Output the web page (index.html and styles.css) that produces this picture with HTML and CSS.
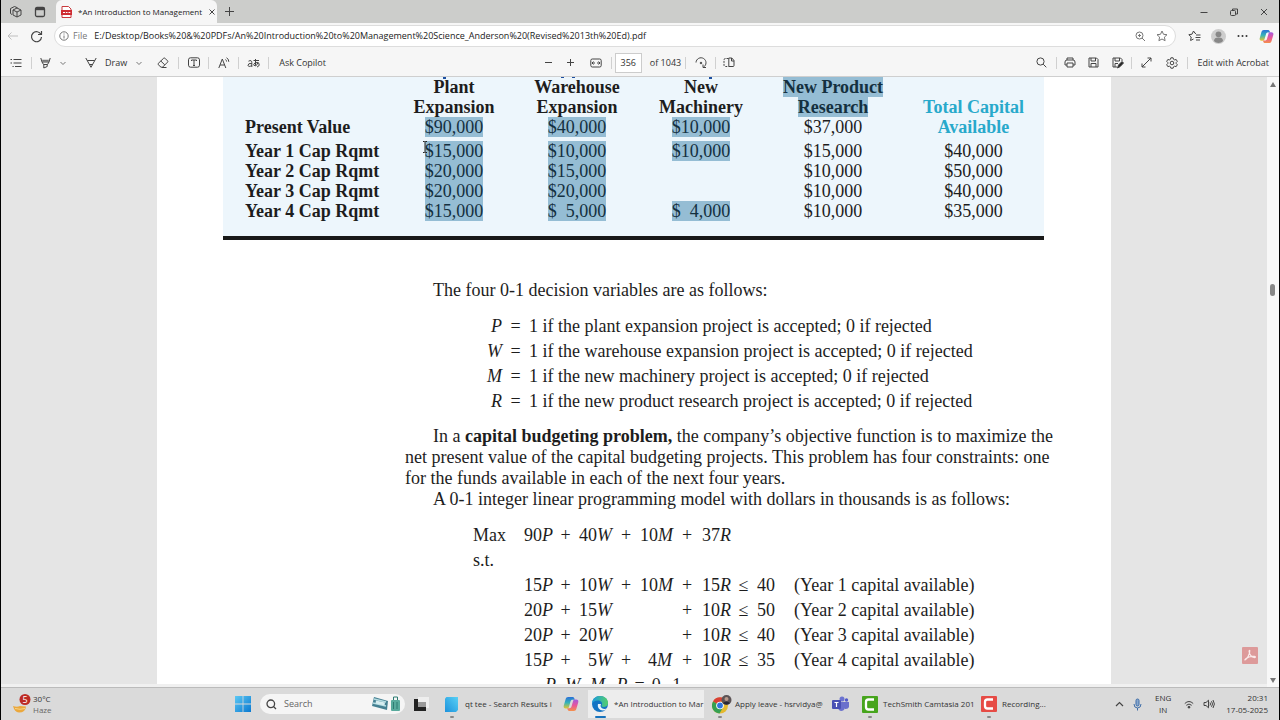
FILE: index.html
```html
<!DOCTYPE html>
<html lang="en">
<head>
<meta charset="utf-8">
<title>An Introduction to Management Science</title>
<link rel="stylesheet" href="styles.css">
</head>
<body>
<svg class="defs" aria-hidden="true">
  <defs>
    <linearGradient id="gBlue" x1="0" y1="0" x2="1" y2="1"><stop offset="0" stop-color="#5cc8f4"/><stop offset="1" stop-color="#0a78d0"/></linearGradient>
    <linearGradient id="gNote" x1="1" y1="0" x2="0" y2="1"><stop offset="0" stop-color="#58d0f5"/><stop offset="1" stop-color="#1c92dc"/></linearGradient>
    <linearGradient id="gCopA" x1="0" y1="0" x2="0" y2="1"><stop offset="0" stop-color="#2a6fd8"/><stop offset=".5" stop-color="#35b4b8"/><stop offset="1" stop-color="#e8c52e"/></linearGradient>
    <linearGradient id="gCopB" x1="0" y1="0" x2="0" y2="1"><stop offset="0" stop-color="#a45be0"/><stop offset=".5" stop-color="#e7569b"/><stop offset="1" stop-color="#f5904a"/></linearGradient>
    <linearGradient id="gEdge" x1="0" y1="0" x2="1" y2="0"><stop offset="0" stop-color="#1c9be0"/><stop offset="1" stop-color="#54d06a"/></linearGradient>
  </defs>
  <symbol id="chev" viewBox="0 0 10 10"><path d="M2.500 4l2.500 2.500L7.500 4" fill="none" stroke="#777"/></symbol>
  <symbol id="copilot" viewBox="0 0 16 16"><path d="M5.200 1h4.300c1 0 1.600.6 1.900 1.500l.4 1.300H9.600c-1.200 0-1.800.6-2.100 1.600L5.900 11c-.3 1-.9 1.500-1.900 1.500H2.800C1 12.500.3 11.200.8 9.500L2.600 3.200C3 1.800 3.800 1 5.200 1z" fill="url(#gCopA)"/><path d="M10.800 15H6.500c-1 0-1.600-.6-1.900-1.500l-.4-1.300h2.200c1.200 0 1.800-.6 2.100-1.600L10.100 5c.3-1 .9-1.500 1.900-1.500h1.200c1.800 0 2.500 1.300 2 3l-1.800 6.300c-.4 1.400-1.200 2.200-2.600 2.200z" fill="url(#gCopB)"/></symbol>
</svg>

<header class="tabs">
  <button class="tabicon" aria-label="Workspaces"><svg width="14" height="14" viewBox="0 0 14 14" class="ln"><path d="M4 5l4-2 4 2v5l-4 2-4-2zM4 5l4 2 4-2M8 7v5M3 9.500L1.500 8.500v-5L5.500 1.500l3 1.300"/></svg></button>
  <button class="tabicon" aria-label="Tab actions"><svg width="12" height="12" viewBox="0 0 12 12" class="ln"><rect x="1.500" y="1.500" width="9" height="9" rx="1.500" stroke-width="1.300"/><path d="M1.500 3h9" stroke-width="2.400"/></svg></button>
  <div class="tab">
    <svg width="11" height="12" viewBox="0 0 11 12"><path d="M1 .5h6.500L10 3v8.500H1z" fill="#fff" stroke="#c8393d"/><rect y="4" width="11" height="5" fill="#cf2c32"/><path d="M2 6.500h2M4.800 6.500h1.700M7.500 6.500h1.800" stroke="#fff"/></svg>
    <span class="tabtitle">*An Introduction to Management</span>
    <button aria-label="Close tab"><svg width="8" height="8" viewBox="0 0 8 8" class="ln"><path d="M1.500 1.500l5 5M6.500 1.500l-5 5"/></svg></button>
  </div>
  <button class="newtab" aria-label="New tab"><svg width="11" height="11" viewBox="0 0 11 11" class="ln"><path d="M5.500 1v9M1 5.500h9"/></svg></button>
  <div class="win">
    <button aria-label="Minimize"><svg width="10" height="10" viewBox="0 0 10 10" class="ln"><path d="M1.500 5.500h7"/></svg></button>
    <button aria-label="Restore"><svg width="10" height="10" viewBox="0 0 10 10" class="ln"><rect x="1.500" y="3.500" width="5" height="5" rx="1"/><path d="M3.500 3.500v-1.500h5v5h-2"/></svg></button>
    <button aria-label="Close"><svg width="10" height="10" viewBox="0 0 10 10" class="ln"><path d="M2 2l6 6M8 2l-6 6"/></svg></button>
  </div>
</header>

<div class="nav">
  <button class="back" aria-label="Back"><svg width="12" height="10" viewBox="0 0 12 10" class="ln"><path d="M11 5H1M4.500 1.500L1 5l3.500 3.500"/></svg></button>
  <button class="reload" aria-label="Reload"><svg width="13" height="13" viewBox="0 0 13 13" class="ln"><path d="M11 4.500A5 5 0 1 0 11.500 7M11.500 1v3.500H8" stroke-width="1.200"/></svg></button>
  <div class="address">
    <svg width="10" height="10" viewBox="0 0 10 10" class="ln grey"><circle cx="5" cy="5" r="4.200"/><path d="M5 4.500v3M5 2.500v1"/></svg>
    <span class="file">File</span>
    <input class="url" aria-label="Address" value="E:/Desktop/Books%20&amp;%20PDFs/An%20Introduction%20to%20Management%20Science_Anderson%20(Revised%2013th%20Ed).pdf">
    <button aria-label="Zoom level"><svg width="11" height="11" viewBox="0 0 11 11" class="ln grey"><circle cx="4.500" cy="4.500" r="3.500"/><path d="M7 7l3 3M3 4.500h3M4.500 3v3"/></svg></button>
    <button aria-label="Favourite"><svg width="12" height="12" viewBox="0 0 12 12" class="ln grey"><path d="M6 1l1.500 3.300 3.500.4-2.600 2.400.7 3.600L6 9l-3.100 1.700.7-3.600L1 4.700l3.500-.4z"/></svg></button>
  </div>
  <button class="navico" aria-label="Favourites"><svg width="13" height="12" viewBox="0 0 13 12" class="ln"><path d="M8 3.500L7 3.300 5.500 1 4 4.200.8 4.700 3.200 7l-.6 3.500L5.500 9M8 5h4.500M7.500 7.500h5M8 10h4"/></svg></button>
  <button class="navico" aria-label="Profile"><svg width="15" height="15" viewBox="0 0 15 15"><circle cx="7.500" cy="7.500" r="7.500" fill="#cdcdcd"/><circle cx="7.500" cy="5.300" r="2.900" fill="#888"/><path d="M3 12c0-2.500 1.500-3.500 4.500-3.500S12 9.500 12 12c-2 2.500-7 2.500-9 0z" fill="#888"/></svg></button>
  <button class="navico" aria-label="More"><svg width="11" height="4" viewBox="0 0 11 4" fill="#333"><circle cx="1.500" cy="2" r="1"/><circle cx="5.500" cy="2" r="1"/><circle cx="9.500" cy="2" r="1"/></svg></button>
  <button class="navico" aria-label="Copilot"><svg width="15" height="15"><use href="#copilot"/></svg></button>
</div>

<div class="tools">
  <div class="group">
    <button class="t30" aria-label="Contents"><svg width="12" height="10" viewBox="0 0 12 10" class="ln"><path d="M3.500 1.500h8M3.500 5h8M5 8.500h6.500M.5 1.500h1.500M.5 5h1.500M2.500 8.500h1.200"/></svg></button>
    <i class="sep"></i>
    <button class="t26" aria-label="Highlight"><svg width="11" height="12" viewBox="0 0 11 12" class="ln"><path d="M.8 1l1.200 4h7l1.200-4M2 5l1.500 2.500h4L9 5M3.800 7.500V11l3.400-1.500v-2"/><path d="M2 2.800h7l-.5 2h-6z" fill="#777" stroke="none"/></svg></button>
    <button class="t10" aria-label="Highlight colours"><svg width="10" height="10"><use href="#chev"/></svg></button>
    <button class="draw"><svg width="12" height="11" viewBox="0 0 12 11" class="ln"><path d="M.8 1L6 10.300 11.200 1M2.300 3.500h7.400M4.500 7.500h3"/></svg>Draw</button>
    <button class="t10" aria-label="Draw options"><svg width="10" height="10"><use href="#chev"/></svg></button>
    <button class="t30 erase" aria-label="Erase"><svg width="12" height="12" viewBox="0 0 12 12" class="ln"><path d="M1.200 6.500L6.700 1.200q.6-.5 1.200 0l2.700 2.700q.5.6 0 1.200L5.500 10.200H4L1.200 7.600q-.5-.6 0-1.100zM3.800 4l4 3.900M5 10.500h4.500"/></svg></button>
    <i class="sep"></i>
    <button class="t29" aria-label="Add text"><svg width="12" height="11" viewBox="0 0 12 11" class="ln"><rect x=".5" y=".8" width="11" height="9.400" rx="2"/><path d="M3.500 4V3h5v1M6 3v5.500M5 8.500h2"/></svg></button>
    <i class="sep"></i>
    <button class="t29" aria-label="Read aloud"><svg width="12" height="12" viewBox="0 0 12 12" class="ln"><path d="M.8 11L4.300 2l3.500 9M2 8h4.500M7.500 2.500q1 .7 1 2M8.500.8q2.300 1 2.300 4"/></svg></button>
    <i class="sep"></i>
    <button class="t29" aria-label="Translate"><svg width="13" height="10" viewBox="0 0 13 10" class="ln"><path d="M1.500 3.200Q4.800 1.500 4.800 4.500V9M4.800 5.500Q1 5 1 7.300 1.500 9.500 4.800 7.500M6.500 2.500h5.500M8.500 1v6.500q-2 .5-1.800-1 .5-2 3.500-2 2.300.3 2 2.500-.4 1.500-2.200 2M11 4q-.5 3-2.500 4"/></svg></button>
    <i class="sep"></i>
    <button class="ask">Ask Copilot</button>
  </div>
  <div class="group">
    <button class="t22" aria-label="Zoom out"><svg width="9" height="9" viewBox="0 0 9 9" class="ln"><path d="M1 4.500h7"/></svg></button>
    <button class="t22" aria-label="Zoom in"><svg width="9" height="9" viewBox="0 0 9 9" class="ln"><path d="M1 4.500h7M4.500 1v7"/></svg></button>
    <button class="t29" aria-label="Fit to width"><svg width="12" height="10" viewBox="0 0 12 10" class="ln"><rect x=".8" y="1" width="10.400" height="8" rx="1.500"/><path d="M2 5h3M7 5h3M3.500 3.500L2 5l1.500 1.500M8.500 3.500L10 5 8.500 6.500"/></svg></button>
    <i class="sep"></i>
    <input class="pageno" id="pageno" value="356"><label class="of" for="pageno">of 1043</label>
    <i class="sep"></i>
    <button class="t29" aria-label="Rotate"><svg width="12" height="12" viewBox="0 0 12 12" class="ln"><path d="M1 5.500a5 5 0 1 1 7.500 4.600M8 7.500v3h3"/><circle cx="6" cy="6" r=".8" fill="#444"/></svg></button>
    <i class="sep"></i>
    <button class="t26" aria-label="Page view"><svg width="12" height="11" viewBox="0 0 12 11" class="ln"><path d="M5.500 1.500h-3q-1.500 0-1.500 1.500v5q0 1.500 1.500 1.500h3" stroke-dasharray="2 1"/><path d="M5.800 1h3L11 3.500V8.500q0 1-1 1H5.800zM8.500 1v3H11"/></svg></button>
  </div>
  <div class="group right">
    <button class="t29" aria-label="Find"><svg width="11" height="11" viewBox="0 0 11 11" class="ln"><circle cx="4.500" cy="4.500" r="3.600"/><path d="M7.200 7.200L10.300 10.300"/></svg></button>
    <i class="sep"></i>
    <button class="t26" aria-label="Print"><svg width="12" height="11" viewBox="0 0 12 11" class="ln"><path d="M3 3V1h6v2M3 8H1V5q0-2 2-2h6q2 0 2 2v3H9M3 6h6v4H3z"/></svg></button>
    <button class="t22" aria-label="Save"><svg width="11" height="11" viewBox="0 0 11 11" class="ln"><path d="M1 1h7.500L10 2.500V10H1zM3 1v3h4.500V1M3 10V6.500h5V10"/></svg></button>
    <button class="t26" aria-label="Save as"><svg width="12" height="12" viewBox="0 0 12 12" class="ln"><path d="M5 10H1V1h7.500L10 2.500V4M3 1v3h4.500V1M3 10V6.500h3"/><path d="M5.500 11l1-3L10 4.500 11.500 6 8 9.700z" fill="#222"/></svg></button>
    <i class="sep"></i>
    <button class="t29" aria-label="Full screen"><svg width="11" height="11" viewBox="0 0 11 11" class="ln"><path d="M1 10L10 1M6.500 1H10v3.500M1 6.500V10h3.500"/></svg></button>
    <button class="t22 gear" aria-label="Settings"><svg width="12" height="12" viewBox="0 0 12 12" class="ln"><path d="M4.900.8h2.200l.5 1.600 1 .5 1.600-.4 1.100 1.900L10.200 5.500v1l1.100 1.200-1.100 1.900-1.600-.4-1 .5-.5 1.500H4.900l-.5-1.500-1-.5-1.600.4L.7 7.700l1.100-1.200v-1L.7 4.400l1.100-1.900 1.600.4 1-.5z"/><circle cx="6" cy="6" r="1.800"/></svg></button>
    <i class="sep"></i>
    <button class="acro">Edit with Acrobat</button>
  </div>
</div>

<main class="viewer">
  <div class="canvas">
    <article class="page">
      <div class="panel">
        <svg class="cut" width="270" height="3" viewBox="0 0 270 3" fill="#1d4fa0" aria-hidden="true"><path d="M0 0h3v2H0zM118 0h3v1h-3zM129 0h3v1h-3zM266 0h3v2h-3z"/></svg>
        <table class="data">
          <colgroup><col class="c0"><col class="c1"><col class="c2"><col class="c2"><col class="c4"><col></colgroup>
          <tr><td></td><th>Plant<br>Expansion</th><th>Warehouse<br>Expansion</th><th>New<br>Machinery</th><th><mark>New Product</mark><br><mark>Research</mark></th><th class="total" rowspan="2">Total Capital<br>Available</th></tr>
          <tr><th class="lab">Present Value</th><td><mark>$90,000</mark></td><td><mark>$40,000</mark></td><td><mark>$10,000</mark></td><td>$37,000</td></tr>
          <tr class="first"><th class="lab">Year 1 Cap Rqmt</th><td><mark>$15,000</mark></td><td><mark>$10,000</mark></td><td><mark>$10,000</mark></td><td>$15,000</td><td>$40,000</td></tr>
          <tr><th class="lab">Year 2 Cap Rqmt</th><td><mark>$20,000</mark></td><td><mark>$15,000</mark></td><td></td><td>$10,000</td><td>$50,000</td></tr>
          <tr><th class="lab">Year 3 Cap Rqmt</th><td><mark>$20,000</mark></td><td><mark>$20,000</mark></td><td></td><td>$10,000</td><td>$40,000</td></tr>
          <tr><th class="lab">Year 4 Cap Rqmt</th><td><mark>$15,000</mark></td><td><mark>$&nbsp; 5,000</mark></td><td><mark>$&nbsp; 4,000</mark></td><td>$10,000</td><td>$35,000</td></tr>
        </table>
        <svg class="ibeam" width="6" height="12" viewBox="0 0 6 12" fill="none" stroke="#222"><path d="M1 .5h1.500L3 1l.5-.5H5M3 1v10M1 11.500h1.500L3 11l.5.5H5"/></svg>
      </div>
      <div class="prose">
        <p class="intro">The four 0-1 decision variables are as follows:</p>
        <table class="vars">
          <tr><td class="v">P</td><td class="eq">=</td><td>1 if the plant expansion project is accepted; 0 if rejected</td></tr>
          <tr><td class="v">W</td><td class="eq">=</td><td>1 if the warehouse expansion project is accepted; 0 if rejected</td></tr>
          <tr><td class="v">M</td><td class="eq">=</td><td>1 if the new machinery project is accepted; 0 if rejected</td></tr>
          <tr><td class="v">R</td><td class="eq">=</td><td>1 if the new product research project is accepted; 0 if rejected</td></tr>
        </table>
        <p class="wide">In a <b>capital budgeting problem,</b> the company’s objective function is to maximize the</p>
        <p class="wide cont">net present value of the capital budgeting projects. This problem has four constraints: one</p>
        <p class="cont">for the funds available in each of the next four years.</p>
        <p>A 0-1 integer linear programming model with dollars in thousands is as follows:</p>
        <table class="model">
          <colgroup><col class="m0"><col class="m1"><col class="m2"><col class="m3"><col class="m4"><col class="m5"><col class="m6"><col class="m7"><col class="m8"><col class="m9"><col></colgroup>
          <tr><td>Max</td><td>90<i>P</i></td><td class="op">+</td><td class="r">40<i>W</i></td><td class="op">+</td><td class="r">10<i>M</i></td><td class="op">+</td><td>37<i>R</i></td></tr>
          <tr><td>s.t.</td></tr>
          <tr><td></td><td>15<i>P</i></td><td class="op">+</td><td class="r">10<i>W</i></td><td class="op">+</td><td class="r">10<i>M</i></td><td class="op">+</td><td>15<i>R</i></td><td class="op">≤</td><td>40</td><td class="note">(Year 1 capital available)</td></tr>
          <tr><td></td><td>20<i>P</i></td><td class="op">+</td><td class="r">15<i>W</i></td><td></td><td></td><td class="op">+</td><td>10<i>R</i></td><td class="op">≤</td><td>50</td><td class="note">(Year 2 capital available)</td></tr>
          <tr><td></td><td>20<i>P</i></td><td class="op">+</td><td class="r">20<i>W</i></td><td></td><td></td><td class="op">+</td><td>10<i>R</i></td><td class="op">≤</td><td>40</td><td class="note">(Year 3 capital available)</td></tr>
          <tr><td></td><td>15<i>P</i></td><td class="op">+</td><td class="r">5<i>W</i></td><td class="op">+</td><td class="r">4<i>M</i></td><td class="op">+</td><td>10<i>R</i></td><td class="op">≤</td><td>35</td><td class="note">(Year 4 capital available)</td></tr>
          <tr><td></td><td colspan="9"><div class="bin"><span><i>P,</i></span><span><i>W,</i></span><span><i>M,</i></span><span><i>R</i></span><span>=</span><span>0,</span><span>1</span></div></td></tr>
        </table>
      </div>
    </article>
    <button class="pdfbadge" aria-label="Open in Acrobat"><svg width="16" height="17" viewBox="0 0 16 17"><rect width="16" height="17" rx="1" fill="#dd9a9a"/><path d="M3 13c2-1 5-6 4.800-9.500C7 2.500 6.500 6 9 8.800c2 2.200 4.500 2 4.500 1.200 0-1.200-6-.8-9 1.200-1.500 1-1.800 1.800-1.500 1.800z" fill="none" stroke="#fbeaea" stroke-width="1.200"/></svg></button>
  </div>
  <div class="scroll"><i class="up"></i><i class="thumb"></i><i class="down"></i></div>
</main>

<footer class="taskbar">
  <button class="weather">
    <svg width="19" height="20" viewBox="0 0 19 20"><path d="M1 12q4 1.500 7 0l6 .5q-.5 6-7 6-4.500-.5-6-6.500z" fill="#eba83c"/><path d="M3 14.500q5 1.500 10 0" stroke="#f7d487" fill="none"/><circle cx="13" cy="5.500" r="5.500" fill="#bd2b25"/><text x="13" y="9" font-size="9" fill="#fff" text-anchor="middle" font-family="Open Sans">5</text></svg>
    <span>30°C<br><span class="haze">Haze</span></span>
  </button>
  <button class="start" aria-label="Start"><svg width="16" height="16" viewBox="0 0 16 16" fill="url(#gBlue)"><path d="M0 0h7.600v7.600H0zM8.400 0H16v7.600H8.400zM0 8.400h7.600V16H0zM8.400 8.400H16V16H8.400z"/></svg></button>
  <div class="search">
    <svg width="11" height="11" viewBox="0 0 11 11" class="ln"><circle cx="4.800" cy="4.800" r="3.800" stroke-width="1.300"/><path d="M7.500 7.500L10 10" stroke-width="1.300"/></svg>
    <input aria-label="Search" placeholder="Search">
    <svg width="28" height="16" viewBox="0 0 28 16"><path d="M2 1l14 4-1 9L0 10z" fill="#458092"/><path d="M2 3l12 3M1 7l13 3" stroke="#b5dce2" stroke-width="1.500"/><path d="M4 4.500l9 2-.5 3-9-2z" fill="#d7edf0"/><rect x="19" y="4" width="9" height="11" rx="1" fill="#58aa9c"/><path d="M21.500 4V1h4v3M21.500 6v7M25 6v7" stroke="#2d7c72" fill="none"/></svg>
  </div>
  <button class="view" aria-label="Task view"><svg width="15" height="15" viewBox="0 0 15 15"><rect x="4" width="11" height="11" fill="#eee"/><path d="M0 2h4v8h8v4H0z" fill="#222"/><path d="M4 5h8v5H4z" fill="#999"/></svg></button>
  <button class="task idle"><svg width="15" height="17" viewBox="0 0 15 17"><path d="M2.500 1H14v13l-2 2H1V2.500z" fill="url(#gNote)"/></svg><span>qt tee - Search Results i</span></button>
  <button class="solo" aria-label="Copilot"><svg width="16" height="16"><use href="#copilot"/></svg></button>
  <button class="task active"><svg width="16" height="16" viewBox="0 0 16 16"><circle cx="8" cy="8" r="8" fill="#1374c4"/><path d="M0 8C0 3 3.500 0 8 0c4.800 0 8 3.200 8 7 0 2.500-2 4-4.500 4-2 0-2.500-1-1.700-2C11 7 9 4.500 6 4.500S.5 6 0 8z" fill="url(#gEdge)"/><path d="M6 8c-1 3.500 1.500 6.500 5 6.500 1.500 0 3-.8 4-2-2.500 1-6 .3-6.500-2.500L9 8z" fill="#e8f4fb"/></svg><span>*An Introduction to Mar</span></button>
  <button class="task idle chrome"><svg width="20" height="19" viewBox="0 0 20 19"><circle cx="8" cy="10.500" r="8" fill="#e5b92d"/><path d="M8 10.500L1 6.500A8 8 0 0 1 15 6.500H8z" fill="#d94035"/><path d="M8 10.500L1 6.500a8 8 0 0 0 6.500 12l3.500-6z" fill="#35a052"/><circle cx="8" cy="10.500" r="3.800" fill="#fff"/><circle cx="8" cy="10.500" r="2.900" fill="#2f76dc"/><circle cx="14.500" cy="5" r="5" fill="#5b5355"/><circle cx="14.500" cy="4" r="2" fill="#b99a8b"/><path d="M11 8q3.500-3 7 0-3.500 3-7 0z" fill="#272735"/></svg><span>Apply leave - hsrvidya@</span></button>
  <button class="solo teams" aria-label="Teams"><svg width="17" height="16" viewBox="0 0 17 16"><circle cx="10" cy="3" r="2.500" fill="#6c73d0"/><circle cx="14.500" cy="4" r="1.700" fill="#5059c9"/><path d="M6 6h7v6q-1 3-4 3-3-.5-3-4zM13 6h4v5q-1 2.500-4 2z" fill="#6a70cc"/><rect y="4" width="9" height="9" rx="1" fill="#4950b4"/><path d="M2.500 6.500h4M4.500 6.500v4.500" stroke="#fff" stroke-width="1.200"/></svg></button>
  <button class="task idle cam"><svg width="16" height="17" viewBox="0 0 16 17"><rect width="16" height="17" rx="1" fill="#47a51d"/><path d="M12 3.500H6.500Q4 3.500 4 6v5q0 2.500 2.500 2.500H12" fill="none" stroke="#fff" stroke-width="2.300"/></svg><span>TechSmith Camtasia 201</span></button>
  <button class="task idle rec"><svg width="16" height="16" viewBox="0 0 16 16"><rect width="16" height="16" rx="1" fill="#e64b45"/><path d="M12 3.500H6.500Q4 3.500 4 6v4q0 2.500 2.500 2.500H12" fill="none" stroke="#fff" stroke-width="2.300"/></svg><span>Recording...</span></button>
  <div class="tray">
    <svg width="9" height="8" viewBox="0 0 9 8" class="ln"><path d="M1 6l3.500-3.500L8 6" stroke-width="1.200"/></svg>
    <svg width="9" height="13" viewBox="0 0 9 13" fill="none" stroke="#3e6da8"><rect x="3" y="1" width="3" height="7" rx="1.500" fill="#88a7cc"/><path d="M1 6q0 4 3.500 4T8 6M4.500 10v2.500"/></svg>
    <span class="lang">ENG<br>IN</span>
    <svg width="10" height="9" viewBox="0 0 10 9" class="ln"><path d="M.8 3.500q4.200-4 8.400 0M2.300 5.300q2.700-2.500 5.400 0"/><circle cx="5" cy="7.200" r=".9" fill="#444"/></svg>
    <svg width="12" height="10" viewBox="0 0 12 10" class="ln"><path d="M1 3.500h2L5.500 1.200v7.600L3 6.500H1zM7 3.500q1 1.500 0 3M8.500 2.200q2 2.800 0 5.600M10 1q2.800 4 0 8"/></svg>
    <time>20:31<br>17-05-2025</time>
  </div>
</footer>
</body>
</html>
```
FILE: styles.css
```css
* { box-sizing: border-box; }
body {
  margin: 0;
  height: 100vh;
  display: flex;
  flex-direction: column;
  overflow: hidden;
  border-left: 1px solid #000;
  border-right: 1px solid #000;
  background: #f6f6f6;
  color: #333;
  font: 9px/12px "Open Sans", "Noto Sans", sans-serif;
}
button, input { font: inherit; color: inherit; }
button {
  display: flex;
  align-items: center;
  justify-content: center;
  flex: none;
  padding: 0;
  border: 0;
  background: none;
  white-space: nowrap;
}
svg { flex: none; display: block; }
.defs { position: absolute; width: 0; height: 0; }
.ln { fill: none; stroke: #444; stroke-width: 1; }
.ln.grey { stroke: #777; }

/* Tab strip */
.tabs { display: flex; height: 23px; flex: none; align-items: center; background: #cccdcb; padding-left: 3px; }
.tabicon { width: 24px; }
.tab {
  display: flex;
  align-items: center;
  align-self: stretch;
  width: 161px;
  margin-left: 4px;
  padding: 0 6px 0 5px;
  gap: 6px;
  border-radius: 6px 6px 0 0;
  background: #f6f6f6;
}
.tabtitle {
  flex: 1;
  white-space: nowrap;
  color: #222;
  font-size: 8px;
}
.newtab { width: 24px; }
.win { display: flex; margin-left: auto; gap: 20px; padding-right: 10px; }

/* Address bar */
.nav { display: flex; height: 26px; flex: none; align-items: center; padding: 0 1px 0 6px; }
.back { width: 12px; opacity: .3; }
.reload { width: 35px; }
.address {
  display: flex;
  flex: 1;
  align-items: center;
  height: 22px;
  padding: 0 5px 0 4px;
  gap: 4px;
  border: 1px solid #ddd;
  border-radius: 11px;
  background: #fff;
}
.address button { width: 17px; }
.file { color: #777; margin-right: 3px; }
.url { flex: 1; min-width: 0; padding: 0; border: 0; background: none; color: #222; outline: 0; }
.navico { width: 24px; }
.address + .navico { margin-left: 6px; }

/* PDF toolbar */
.tools {
  display: grid;
  grid-template-columns: 1fr auto 1fr;
  flex: none;
  height: 28px;
  border-bottom: 1px solid #cfcfcf;
}
.group { display: flex; align-items: center; }
.right { justify-content: flex-end; padding-right: 10px; }
.sep { width: 1px; height: 12px; flex: none; background: #d0d0d0; }
.t10 { width: 10px; }
.t22 { width: 22px; }
.t26 { width: 26px; }
.t29 { width: 29px; }
.t30 { width: 30px; }
.draw { gap: 8px; margin: 0 7px 0 17px; }
.erase { margin-left: 4px; }
.gear { margin-right: 4px; }
.ask { margin-left: 10px; }
.acro { margin-left: 10px; }
.pageno { width: 27px; height: 20px; margin: 0 8px 0 3px; padding: 0; border: 1px solid #ccc; background: #fff; text-align: center; }
.of { margin-right: 4px; }

/* Viewer */
.viewer { flex: 1; min-height: 0; display: flex; border-bottom: 1px solid #bbb; }
.canvas {
  position: relative;
  flex: 1;
  overflow: hidden;
  border-bottom: 3px solid #f0f0f0;
  background: #e5e5e5;
}
.page {
  max-width: 954px;
  height: 100%;
  margin: 0 auto;
  padding: 0 67px 0 66px;
  overflow: hidden;
  background: #fff;
  color: #1d1d1d;
  font: 18px/21px "Liberation Serif", serif;
}
.panel { position: relative; padding-bottom: 15px; border-bottom: 4px solid #191919; background: #edf6fc; }
.cut { position: absolute; top: 0; left: 220px; }
.ibeam { position: absolute; top: 64px; left: 199px; }
table { border-collapse: collapse; }
td, th { padding: 0; white-space: nowrap; }
.data { width: 100%; table-layout: fixed; line-height: 20px; text-align: center; }
.data .lab { padding-left: 22px; text-align: left; }
.c0 { width: 170px; }
.c1 { width: 122px; }
.c2 { width: 124px; }
.c4 { width: 140px; }
.total { vertical-align: bottom; color: #28a9cb; }
.first td, .first th { padding-top: 4px; }
mark { display: inline-block; vertical-align: top; background: #95bdd4; color: #14303f; }

.prose { padding: 40px 0 0 182px; }
.prose p { margin: 0; text-indent: 28px; white-space: nowrap; }
.prose .cont { text-indent: 0; }
.prose .wide { text-align-last: justify; }
.vars { margin: 13px 0 12px 81px; line-height: 25px; }
.v { width: 16px; text-align: right; font-style: italic; }
.eq { width: 27px; text-align: center; }
.model { width: 100%; margin-top: 13px; table-layout: fixed; line-height: 25px; }
.m0 { width: 119px; }
.m1 { width: 33px; }
.m2 { width: 17px; }
.m3 { width: 38px; }
.m4 { width: 28px; }
.m5 { width: 32px; }
.m6 { width: 30px; }
.m7 { width: 28px; }
.m8 { width: 27px; }
.m9 { width: 37px; }
.model td:first-child { padding-left: 68px; }
.op { text-align: center; }
.r { text-align: right; }
.bin { display: flex; gap: 7px; padding-left: 21px; }

.pdfbadge { position: absolute; right: 9px; bottom: 20px; }
.scroll { display: flex; flex-direction: column; align-items: center; width: 12px; padding: 5px 1px 4px 0; background: #f8f8f8; }
.up { border: 3px solid transparent; border-top: 0; border-bottom: 5px solid #777; }
.down { margin-top: auto; border: 3px solid transparent; border-bottom: 0; border-top: 5px solid #777; }
.thumb { width: 5px; height: 12px; margin-top: 197px; border-radius: 3px; background: #888; }

/* Taskbar */
.taskbar { display: flex; height: 32px; flex: none; align-items: center; background: #dadada; padding: 0 11px; font-size: 8px; }
.weather { gap: 2px; width: 223px; justify-content: flex-start; text-align: left; line-height: 11px; }
.haze { color: #666; }
.start { width: 16px; }
.search { display: flex; align-items: center; gap: 7px; width: 145px; height: 20px; margin: 0 9px; padding: 0 5px 0 6px; border-radius: 10px; background: #f5f5f5; font-size: 9px; }
.search input { flex: 1; min-width: 0; padding: 0; border: 0; background: none; }
.search input::placeholder { color: #666; }
.view { width: 15px; }
.task { position: relative; gap: 6px; height: 28px; justify-content: flex-start; width: 107px; margin-left: 15px; }
.task span { flex: 1; text-align: left; }
.solo { width: 16px; margin-left: 12px; }
.active { width: 116px; margin-left: 9px; padding: 0 5px 0 4px; background: #ededed; }
.task::after { content: ""; position: absolute; bottom: 0; left: 6px; width: 4px; height: 2px; border-radius: 1px; background: #888; }
.active::after { left: 7px; width: 11px; background: #1673bd; }
.chrome { width: 112px; margin-left: 8px; gap: 3px; }
.teams { margin-left: 8px; }
.cam { margin-left: 14px; gap: 5px; }
.rec { width: 64px; margin-left: 12px; gap: 5px; }
.tray { display: flex; align-items: center; gap: 9px; margin-left: auto; }
.lang { margin: 0 4px; text-align: center; }
.tray time { margin-left: 2px; text-align: right; }
```
